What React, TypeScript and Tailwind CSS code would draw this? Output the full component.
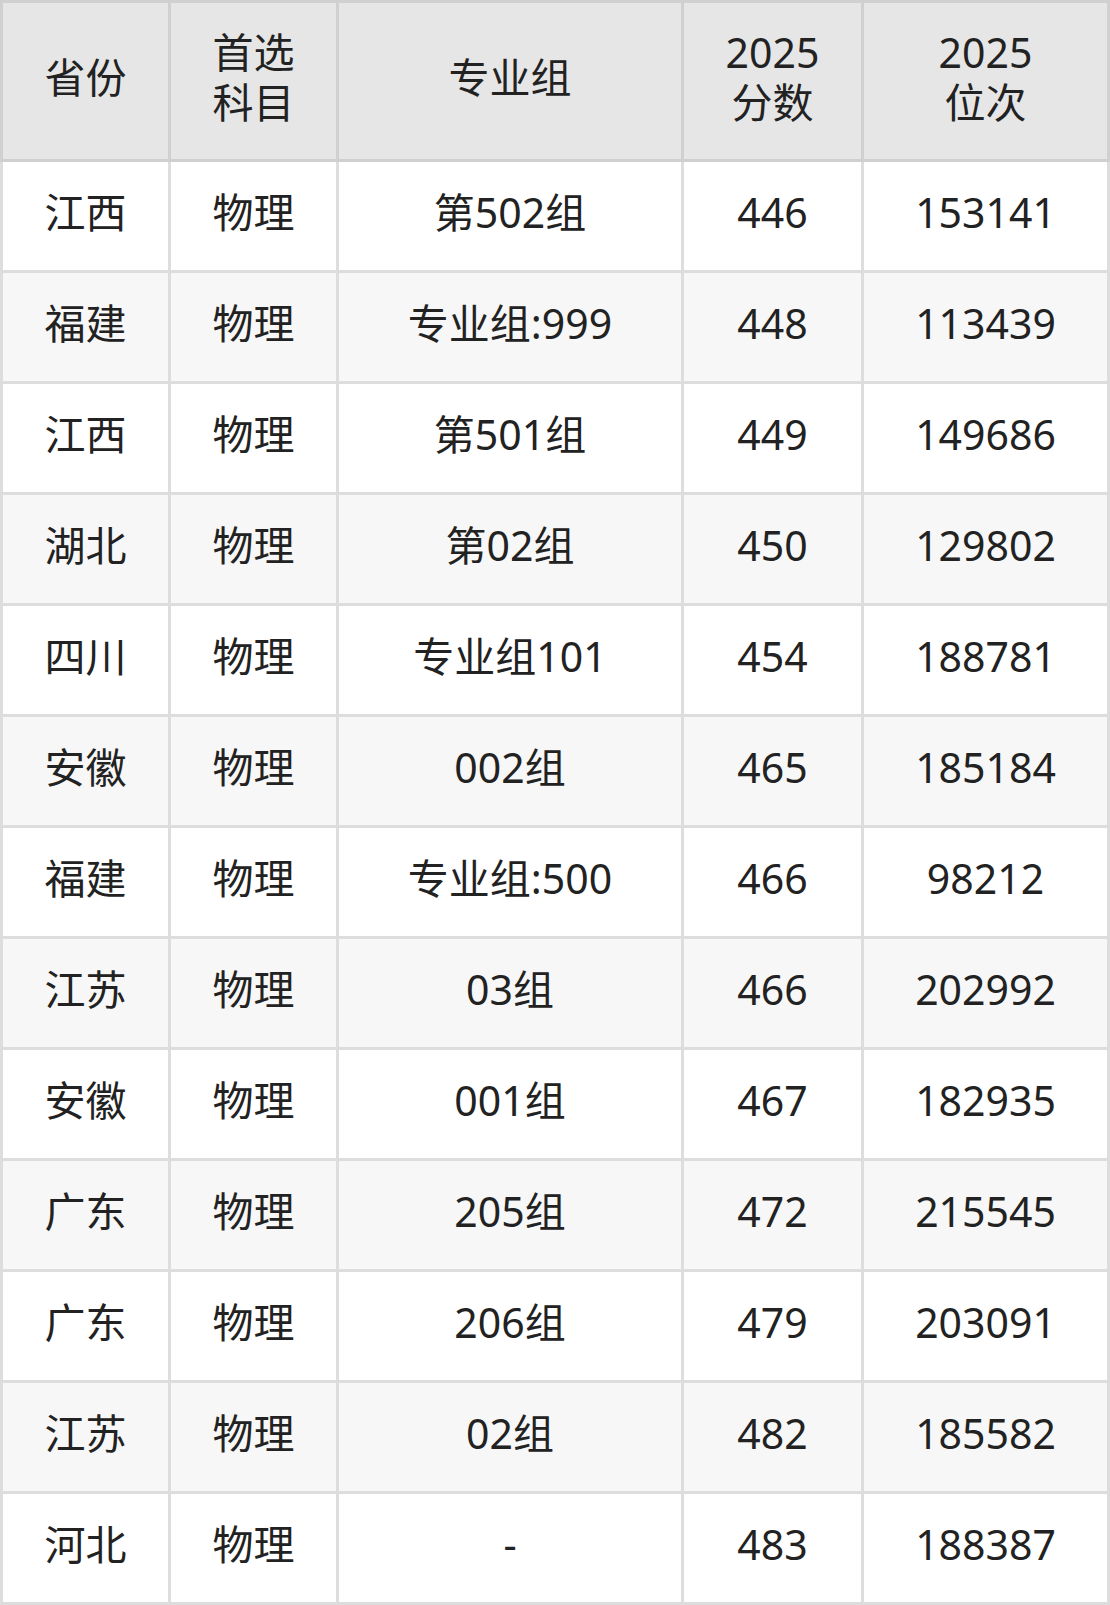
import React from 'react';

const rows: [string, string, string, string, string][] = [
  ['江西', '物理', '第502组', '446', '153141'],
  ['福建', '物理', '专业组:999', '448', '113439'],
  ['江西', '物理', '第501组', '449', '149686'],
  ['湖北', '物理', '第02组', '450', '129802'],
  ['四川', '物理', '专业组101', '454', '188781'],
  ['安徽', '物理', '002组', '465', '185184'],
  ['福建', '物理', '专业组:500', '466', '98212'],
  ['江苏', '物理', '03组', '466', '202992'],
  ['安徽', '物理', '001组', '467', '182935'],
  ['广东', '物理', '205组', '472', '215545'],
  ['广东', '物理', '206组', '479', '203091'],
  ['江苏', '物理', '02组', '482', '185582'],
  ['河北', '物理', '-', '483', '188387'],
];

const cols = 'grid grid-cols-[165px_165px_342px_177px_243px] gap-[3px]';

const App = () => {
  return (
    <div className="w-[1110px] text-[#222222] text-[41px] font-['Noto_Sans','Noto_Sans_CJK_SC',sans-serif]">
      {/* Header */}
      <div className={`${cols} bg-[#d0d0d0] p-[3px]`}>
        {[['省份'], ['首选', '科目'], ['专业组'], ['2025', '分数'], ['2025', '位次']].map((lines, i) => (
          <div key={i} className="bg-[#e6e6e6] h-[156px] pb-[8px] flex flex-col items-center justify-center leading-[50px]">
            {lines.map((l) => (
              <span key={l}>{l}</span>
            ))}
          </div>
        ))}
      </div>

      {/* Body */}
      <div className={`${cols} bg-[#dddddd] px-[3px] pb-[3px]`}>
        {rows.map((r, ri) =>
          r.map((c, ci) => (
            <div
              key={`${ri}-${ci}`}
              className={`h-[108px] pb-[6px] flex items-center justify-center ${ri % 2 === 0 ? 'bg-white' : 'bg-[#f7f7f7]'}`}
            >
              {c}
            </div>
          ))
        )}
      </div>
    </div>
  );
};

export default App;
